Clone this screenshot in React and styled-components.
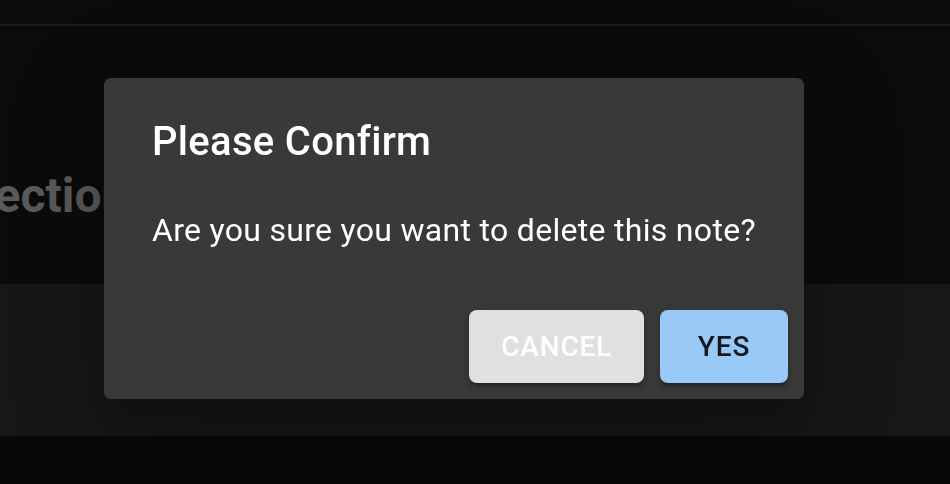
import React from 'react';
import styled, { createGlobalStyle } from 'styled-components';

const GlobalStyle = createGlobalStyle`
    html, body {
        margin: 0;
        padding: 0;
        background: #080808;
        font-family: Roboto, "Liberation Sans", Arial, sans-serif;
        overflow: hidden;
    }
`;

const Page = styled.div`
    width: 950px;
    height: 484px;
    background: #080808;
    overflow: hidden;
`;

const Header = styled.div`
    height: 24px;
    background: #0b0b0b;
    border-bottom: 2px solid #1b1b1b;
`;

const Main = styled.div`
    height: 258px;
    background: #0b0b0b;
    display: flex;
    align-items: flex-start;
    box-sizing: border-box;
`;

// section title, cut by the left edge of the window as in the screenshot
const Heading = styled.h1`
    margin: 141px 0 0 -35px;
    font-size: 48px;
    font-weight: 700;
    line-height: 1.2;
    color: #5a5a5a;
    white-space: nowrap;
`;

const Card = styled.div`
    height: 152px;
    background: #171717;
`;

const Overlay = styled.div`
    position: fixed;
    inset: 0;
    display: flex;
    align-items: flex-start;
    justify-content: flex-start;
    padding: 78px 0 0 104px;
`;

const Dialog = styled.div`
    width: 700px;
    background: #393939;
    border-radius: 7px;
    color: #fff;
    box-shadow: 0px 22px 30px -14px rgba(0,0,0,0.2),
        0px 48px 76px 6px rgba(0,0,0,0.14),
        0px 18px 92px 16px rgba(0,0,0,0.12);
`;

const Title = styled.h2`
    margin: 0;
    padding: 32px 48px;
    font-size: 40px;
    font-weight: 500;
    line-height: 64px;
    letter-spacing: 0.0075em;
`;

const Content = styled.div`
    padding: 0 48px 40px;
`;

const Text = styled.p`
    margin: 0;
    font-size: 32px;
    font-weight: 400;
    line-height: 48px;
    letter-spacing: 0.00938em;
    color: #fff;
`;

const Actions = styled.div`
    display: flex;
    justify-content: flex-end;
    align-items: center;
    gap: 16px;
    padding: 16px;
`;

const Button = styled.button`
    min-width: 128px;
    height: 73px;
    padding: 12px 32px;
    border: none;
    border-radius: 8px;
    font-family: inherit;
    font-size: 28px;
    font-weight: 500;
    letter-spacing: 0.02857em;
    text-transform: uppercase;
    background: ${p => p.$primary ? '#99c9f6' : '#e0e0e0'};
    color: ${p => p.$primary ? 'rgba(0,0,0,0.87)' : '#fff'};
    box-shadow: 0px 6px 2px -4px rgba(0,0,0,0.2),
        0px 4px 4px 0px rgba(0,0,0,0.14),
        0px 2px 10px 0px rgba(0,0,0,0.12);
    cursor: pointer;
`;

export default function App() {
    return (
        <Page>
            <GlobalStyle />
            <Header />
            <Main>
                <Heading>Sections</Heading>
            </Main>
            <Card />
            <Overlay>
                <Dialog role="dialog">
                    <Title>Please Confirm</Title>
                    <Content>
                        <Text>Are you sure you want to delete this note?</Text>
                    </Content>
                    <Actions>
                        <Button>Cancel</Button>
                        <Button $primary>Yes</Button>
                    </Actions>
                </Dialog>
            </Overlay>
        </Page>
    );
}
